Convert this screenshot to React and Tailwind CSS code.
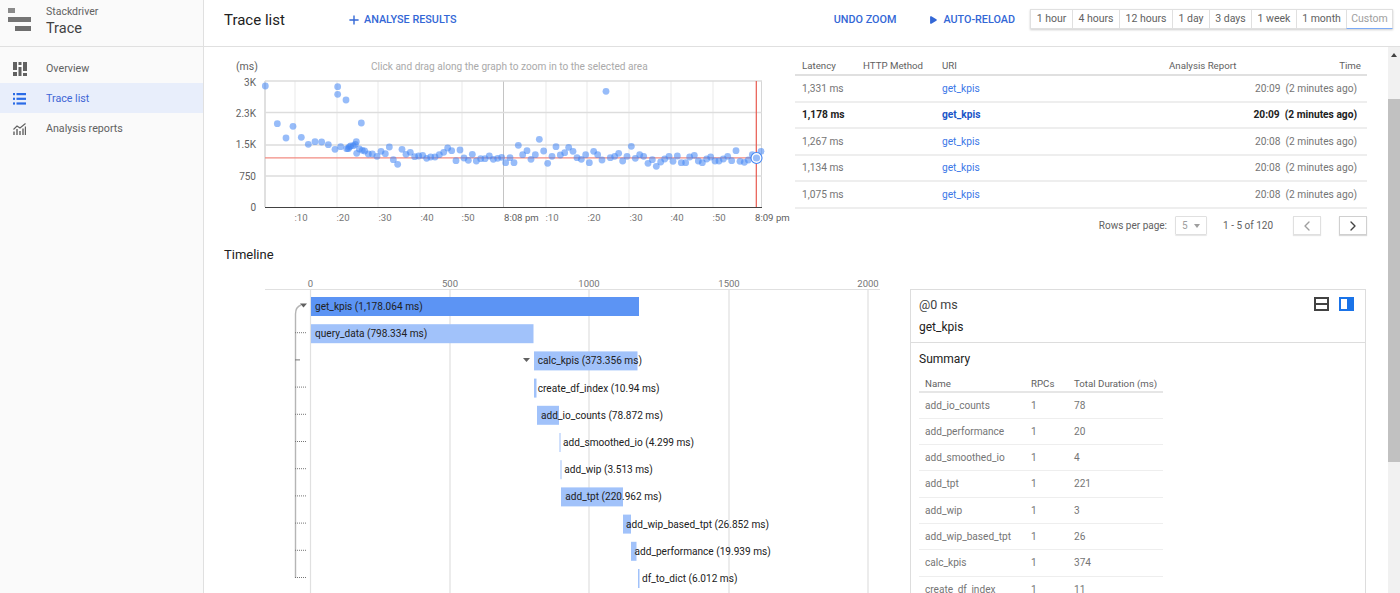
import { Plus, Play, ChevronLeft, ChevronRight } from 'lucide-react'

const ranges = [
  ['1 hour', 42], ['4 hours', 47], ['12 hours', 53], ['1 day', 37],
  ['3 days', 42], ['1 week', 45], ['1 month', 50],
]

const traces = [
  { latency: '1,331 ms', time: '20:09', ago: '(2 minutes ago)' },
  { latency: '1,178 ms', time: '20:09', ago: '(2 minutes ago)', active: true },
  { latency: '1,267 ms', time: '20:08', ago: '(2 minutes ago)' },
  { latency: '1,134 ms', time: '20:08', ago: '(2 minutes ago)' },
  { latency: '1,075 ms', time: '20:08', ago: '(2 minutes ago)' },
]

const summary = [
  ['add_io_counts', 1, 78], ['add_performance', 1, 20], ['add_smoothed_io', 1, 4],
  ['add_tpt', 1, 221], ['add_wip', 1, 3], ['add_wip_based_tpt', 1, 26],
  ['calc_kpis', 1, 374], ['create_df_index', 1, 11],
]

// scatter points read off the chart, in page coords after the conversion below
const ptsA = [[136,108],[172,221],[198,264],[219,229],[244,262],[265,283],[285,275],[305,276],[325,284],[345,298],[353,133],[353,110],[362,290],[378,150],[380,296],[385,296],[388,291],[392,288],[400,287],[406,283],[409,275],[424,219],[410,310],[418,297],[427,301],[434,303],[445,312],[457,312],[471,319],[483,304],[496,311],[508,291],[520,329],[533,343],[546,298],[558,313],[571,307],[584,320],[596,318],[608,316],[620,325],[632,321],[645,321],[658,314],[671,307],[683,294],[695,302],[708,332],[720,300],[732,324],[745,331],[757,313],[769,333],[782,326],[795,326],[808,318],[820,328],[833,325]]
const ptsB = [[5,322],[17,338],[30,323],[42,338],[55,286],[68,314],[81,302],[93,328],[106,314],[118,268],[131,303],[143,340],[156,319],[168,290],[181,315],[194,308],[206,292],[219,304],[231,323],[244,328],[257,314],[268,338],[281,304],[293,314],[306,330],[318,124],[331,323],[344,319],[356,310],[368,333],[381,319],[394,289],[406,325],[419,314],[431,319],[444,340],[457,329],[469,349],[482,336],[494,327],[507,319],[519,334],[532,318],[544,338],[557,338],[569,321],[583,316],[595,333],[607,338],[620,327],[632,321],[645,333],[657,333],[670,327],[683,319],[695,332],[708,302],[720,334],[733,337],[745,330],[757,314],[783,304]]
const points = [
  ...ptsA.map(([x, y]) => [220 + x / 3, 50 + y / 3]),
  ...ptsB.map(([x, y]) => [500 + x / 3, 50 + y / 3]),
]

const spans = [
  { name: 'get_kpis (1,178.064 ms)', x: 311, w: 328, tx: 315, color: '#5c94f4', caret: 303 },
  { name: 'query_data (798.334 ms)', x: 311, w: 222.5, tx: 315, color: '#a1c2fa' },
  { name: 'calc_kpis (373.356 ms)', x: 534, w: 103.5, tx: 537.7, color: '#a1c2fa', caret: 526 },
  { name: 'create_df_index (10.94 ms)', x: 534, w: 2.5, tx: 537.7, color: '#a1c2fa' },
  { name: 'add_io_counts (78.872 ms)', x: 537, w: 22, tx: 541, color: '#a1c2fa' },
  { name: 'add_smoothed_io (4.299 ms)', x: 559.5, w: 1, tx: 563, color: '#a1c2fa' },
  { name: 'add_wip (3.513 ms)', x: 560.5, w: 1, tx: 564.3, color: '#a1c2fa' },
  { name: 'add_tpt (220.962 ms)', x: 561, w: 62, tx: 565.3, color: '#a1c2fa' },
  { name: 'add_wip_based_tpt (26.852 ms)', x: 623, w: 8, tx: 626, color: '#a1c2fa' },
  { name: 'add_performance (19.939 ms)', x: 631, w: 5.5, tx: 634.5, color: '#a1c2fa' },
  { name: 'df_to_dict (6.012 ms)', x: 638, w: 1.5, tx: 642, color: '#a1c2fa' },
]

const font = { fontFamily: 'Roboto, sans-serif' }

function LogoIcon() {
  return (
    <svg width="23" height="23" viewBox="0 0 23 23" className="mt-[8px] shrink-0">
      <rect x="0" y="0" width="7" height="5" fill="#8a8a8a" />
      <rect x="0" y="9" width="23" height="5" fill="#757575" />
      <rect x="7" y="18" width="16" height="5" fill="#6e6e6e" />
    </svg>
  )
}

function OverviewIcon() {
  return (
    <svg width="14" height="14" viewBox="0 0 14 14" fill="#616161">
      <rect x="0" y="0" width="4" height="8" />
      <rect x="0" y="10" width="4" height="4" />
      <rect x="5.5" y="0" width="3" height="3" />
      <rect x="5.5" y="5" width="3" height="9" />
      <rect x="10" y="0" width="4" height="9" />
      <rect x="10" y="11" width="4" height="3" />
    </svg>
  )
}

function ListIcon() {
  return (
    <svg width="13" height="12" viewBox="0 0 13 12" fill="#2a6be6">
      {[0, 4.7, 9.4].map(y => (
        <g key={y}>
          <rect x="0" y={y} width="2" height="2.2" />
          <rect x="3.5" y={y} width="9.5" height="2.2" />
        </g>
      ))}
    </svg>
  )
}

function ReportIcon() {
  return (
    <svg width="13" height="12" viewBox="0 0 13 12" fill="none" stroke="#616161">
      <path d="M0.5 6.5 L4 3 L7 5 L12.5 0.5" strokeWidth="1.1" />
      <path d="M1 12V8.5M4 12V6M7 12V8M10 12V5.5M12.5 12V3.5" strokeWidth="1.4" />
    </svg>
  )
}

function NavItem({ icon, label, active }) {
  return (
    <div className={`flex h-[30px] items-center pt-[2px] ${active ? 'bg-[#e8eefb] text-[#3f66d6]' : 'text-[#616161]'}`}>
      <div className="flex w-[46px] shrink-0 items-center pl-[13px]">{icon}</div>
      <span className="text-[10.7px]">{label}</span>
    </div>
  )
}

function Chart() {
  const hLines = [81, 112.5, 145, 176]
  const vLines = [295, 337, 378, 420, 462, 546, 587, 629, 671, 713]
  const yLabels = [['3K', 86], ['2.3K', 117], ['1.5K', 148], ['750', 180], ['0', 211]]
  const xLabels = [[':10', 301], [':20', 343], [':30', 385], [':40', 427], [':50', 468], [':10', 552], [':20', 594], [':30', 636], [':40', 677], [':50', 719]]
  return (
    <svg width="571" height="175" viewBox="224 50 571 175" className="shrink-0" style={font}>
      <text x="236" y="70" fontSize="10.5" fill="#616161">(ms)</text>
      <text x="371" y="70" fontSize="10.1" fill="#aaaaaa">Click and drag along the graph to zoom in to the selected area</text>
      {yLabels.map(([t, y]) => (
        <text key={t} x="256" y={y} fontSize="10" fill="#616161" textAnchor="end">{t}</text>
      ))}
      {vLines.map(x => <line key={x} x1={x} x2={x} y1="81" y2="207" stroke="#eeeeee" strokeWidth="1.3" />)}
      <line x1="503.5" x2="503.5" y1="81" y2="207" stroke="#c4c4c4" />
      <line x1="761.5" x2="761.5" y1="81" y2="207" stroke="#d6d6d6" />
      <line x1="265" x2="265" y1="81" y2="207" stroke="#d6d6d6" strokeWidth="1.5" />
      {hLines.map(y => <line key={y} x1="265" x2="762" y1={y} y2={y} stroke="#dddddd" strokeWidth="1.3" />)}
      <line x1="265" x2="762" y1="157.8" y2="157.8" stroke="#f28b82" strokeWidth="1.3" />
      <line x1="756.3" x2="756.3" y1="81" y2="207" stroke="#e85a4f" strokeWidth="1.2" />
      {points.map(([x, y], i) => <circle key={i} cx={x} cy={y} r="3.4" fill="#4285f4" fillOpacity="0.55" />)}
      <circle cx="756.5" cy="158" r="5.5" fill="#ffffff" stroke="#4285f4" strokeWidth="1.1" />
      <circle cx="756.5" cy="158" r="3.6" fill="#4285f4" fillOpacity="0.55" />
      <line x1="265" x2="762" y1="207.5" y2="207.5" stroke="#424242" />
      {xLabels.map(([t, x]) => (
        <text key={x} x={x} y="220.5" fontSize="9.6" fill="#757575" textAnchor="middle">{t}</text>
      ))}
      <text x="504" y="220.5" fontSize="9.6" fill="#616161">8:08 pm</text>
      <text x="755" y="220.5" fontSize="9.6" fill="#616161">8:09 pm</text>
    </svg>
  )
}

function TraceTable() {
  return (
    <div className="w-[572px] shrink-0 pt-[6px] text-[10.2px]">
      <div className="grid h-[20px] grid-cols-[61px_79px_227px_1fr_125px] items-start whitespace-nowrap border-b-2 border-[#e0e0e0] pl-[7px] pt-[3px] text-[9.7px] text-[#616161]">
        <span>Latency</span>
        <span>HTTP Method</span>
        <span>URI</span>
        <span>Analysis Report</span>
        <span className="pr-[6px] text-right">Time</span>
      </div>
      {traces.map(t => (
        <div
          key={t.latency}
          className={`grid h-[26.5px] grid-cols-[61px_79px_1fr_200px] items-center border-b-2 border-[#eeeeee] pl-[7px] ${t.active ? 'font-bold text-[#212121]' : 'text-[#757575]'}`}
        >
          <span>{t.latency}</span>
          <span />
          <span className={t.active ? 'text-[#1a56c8]' : 'text-[#3b78e7]'}>get_kpis</span>
          <span className="whitespace-pre pr-[10px] text-right">{t.time}  {t.ago}</span>
        </div>
      ))}
      <div className="flex h-[34px] items-center justify-end text-[10px] text-[#616161]">
        <span>Rows per page:</span>
        <div className="ml-[8px] flex h-[19px] w-[32px] items-center justify-between rounded-[1px] border border-[#e0e0e0] px-[6px] text-[#9e9e9e] shadow-[0_1px_1px_rgba(0,0,0,0.1)]">
          <span>5</span>
          <span className="h-0 w-0 border-x-[3.5px] border-t-[4px] border-x-transparent border-t-[#9e9e9e]" />
        </div>
        <span className="ml-[16px] mr-[20px]">1 - 5 of 120</span>
        <div className="flex h-[19px] w-[28px] items-center justify-center border border-[#e0e0e0] shadow-[0_1px_1px_rgba(0,0,0,0.1)]">
          <ChevronLeft size={16} color="#9e9e9e" />
        </div>
        <div className="ml-[18px] flex h-[19px] w-[28px] items-center justify-center border border-[#d0d0d0] shadow-[0_1px_1px_rgba(0,0,0,0.15)]">
          <ChevronRight size={16} color="#424242" />
        </div>
      </div>
    </div>
  )
}

function Timeline() {
  const ticks = [['0', 310.5], ['500', 450], ['1000', 589], ['1500', 729], ['2000', 868]]
  const rowY = i => 306.5 + i * 27.2
  return (
    <svg width="656" height="330" viewBox="224 263 656 330" className="shrink-0" style={font}>
      {ticks.map(([t, x]) => (
        <g key={t}>
          <text x={x} y="287" fontSize="9.5" fill="#757575" textAnchor="middle">{t}</text>
          <line x1={x} x2={x} y1="290" y2="593" stroke="#e0e0e0" strokeWidth="1.2" />
        </g>
      ))}
      <line x1="265" x2="880" y1="289.5" y2="289.5" stroke="#e0e0e0" />
      <path d="M301 305 Q295.5 307 295.5 314 V578" fill="none" stroke="#b5b5b5" strokeWidth="1.4" />
      {spans.map((s, i) => (
        <g key={s.name}>
          {i > 0 && (
            <line x1="295" x2={i === 2 ? 300 : 306} y1={rowY(i) - 1} y2={rowY(i) - 1} stroke="#757575" strokeDasharray={i === 2 ? '5 0' : '1 1'} />
          )}
          <rect x={s.x} y={rowY(i) - 9.5} width={s.w} height="19" fill={s.color} />
          {s.caret && <path d={`M${s.caret - 3} ${rowY(i) - 3}h7l-3.5 4z`} fill="#616161" />}
          <text x={s.tx} y={rowY(i) + 3.5} fontSize="10.1" fill="#212121">{s.name}</text>
        </g>
      ))}
    </svg>
  )
}

function DetailPanel() {
  return (
    <div className="ml-[30px] w-[456px] shrink-0 border border-b-0 border-[#dddddd]">
      <div className="flex h-[53px] justify-between border-b border-[#dddddd] pl-[8px] pr-[11px]">
        <div>
          <div className="pt-[6px] text-[12.5px] leading-[18px] text-[#424242]">@0 ms</div>
          <div className="pt-[5px] text-[12px] leading-[16px] text-[#212121]">get_kpis</div>
        </div>
        <div className="flex gap-[10px] pt-[7px]">
          <svg width="15" height="14" viewBox="0 0 15 14" fill="none" stroke="#424242" strokeWidth="2">
            <rect x="1" y="1" width="13" height="12" />
            <line x1="1" x2="14" y1="7" y2="7" />
          </svg>
          <svg width="15" height="14" viewBox="0 0 15 14">
            <rect x="1" y="1" width="13" height="12" fill="#ffffff" stroke="#1a73e8" strokeWidth="2" />
            <rect x="8" y="1" width="6" height="12" fill="#1a73e8" />
          </svg>
        </div>
      </div>
      <div className="pl-[8px]">
        <div className="pt-[8px] text-[12px] leading-[16px] text-[#212121]">Summary</div>
        <div className="mt-[10px] w-[244px] text-[10.1px]">
          <div className="grid h-[16px] grid-cols-[106px_43px_1fr] whitespace-nowrap border-b-2 border-[#e6e6e6] pl-[6px] text-[9.7px] leading-[14px] text-[#616161]">
            <span>Name</span>
            <span>RPCs</span>
            <span>Total Duration (ms)</span>
          </div>
          {summary.map(([name, rpcs, total]) => (
            <div key={name} className="grid h-[26.3px] grid-cols-[106px_43px_1fr] items-center border-b border-[#eeeeee] pl-[6px] text-[#757575]">
              <span>{name}</span>
              <span>{rpcs}</span>
              <span>{total}</span>
            </div>
          ))}
        </div>
      </div>
    </div>
  )
}

export default function App() {
  return (
    <div className="flex h-[593px] w-[1400px] overflow-hidden bg-white" style={font}>
      <aside className="w-[204px] shrink-0 border-r border-[#e0e0e0] bg-[#fafafa]">
        <div className="flex h-[47px] gap-[15px] border-b border-[#e0e0e0] pl-[8px]">
          <LogoIcon />
          <div className="pt-[5px]">
            <div className="text-[10.5px] leading-[14px] text-[#616161]">Stackdriver</div>
            <div className="text-[14.5px] leading-[19px] text-[#424242]">Trace</div>
          </div>
        </div>
        <nav className="pt-[6px]">
          <NavItem icon={<OverviewIcon />} label="Overview" />
          <NavItem icon={<ListIcon />} label="Trace list" active />
          <NavItem icon={<ReportIcon />} label="Analysis reports" />
        </nav>
      </aside>

      <main className="flex min-w-0 flex-1 flex-col">
        <header className="flex h-[47px] shrink-0 items-center border-b border-[#e0e0e0] pb-[6px] pl-[20px] pr-[7px]">
          <h1 className="w-[123px] text-[15px] font-normal text-[#212121]">Trace list</h1>
          <div className="flex items-center gap-[3px] text-[10.8px] font-medium text-[#3367d6]">
            <Plus size={14} strokeWidth={2.4} />
            <span>ANALYSE RESULTS</span>
          </div>
          <span className="ml-auto text-[10.8px] font-medium text-[#3367d6]">UNDO ZOOM</span>
          <div className="ml-[32px] flex items-center gap-[5px] text-[10.8px] font-medium text-[#3367d6]">
            <Play size={10} fill="#3367d6" strokeWidth={0} />
            <span>AUTO-RELOAD</span>
          </div>
          <div className="mb-[2px] ml-[15px] flex h-[20px] text-[10.5px] text-[#616161] shadow-[0_1px_2px_rgba(0,0,0,0.2)]">
            {ranges.map(([label, w]) => (
              <span key={label} style={{ width: w }} className="flex items-center justify-center border border-r-0 border-[#e0e0e0]">{label}</span>
            ))}
            <span className="flex w-[47px] items-center justify-center border border-[#e0e0e0] border-b-[#7baaf7] text-[#9e9e9e]">Custom</span>
          </div>
        </header>

        <div className="flex min-h-0 flex-1">
          <div className="w-[1184px] shrink-0 overflow-hidden">
            <div className="flex pl-[20px] pt-[3px]">
              <Chart />
              <TraceTable />
            </div>
            <h2 className="h-[20px] pl-[20px] text-[13px] font-normal leading-[24px] text-[#212121]">Timeline</h2>
            <div className="flex pl-[20px]">
              <Timeline />
              <div className="pt-[26px]">
                <DetailPanel />
              </div>
            </div>
          </div>
          <div className="flex-1 bg-[#f1f1f1]">
            <span className="mx-auto mt-[6px] block h-0 w-0 border-x-[3.5px] border-b-[4px] border-x-transparent border-b-[#424242]" />
            <div className="mt-[42px] h-[363px] bg-[#c1c1c1]" />
          </div>
        </div>
      </main>
    </div>
  )
}
